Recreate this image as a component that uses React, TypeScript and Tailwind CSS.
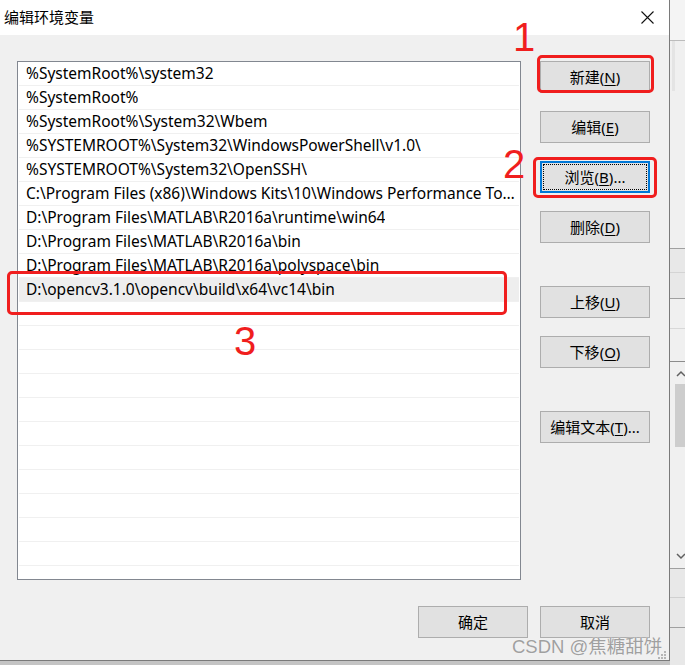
const FONT = "font-['Noto_Sans','Noto_Sans_CJK_SC',sans-serif]"

const paths = [
  '%SystemRoot%\\system32',
  '%SystemRoot%',
  '%SystemRoot%\\System32\\Wbem',
  '%SYSTEMROOT%\\System32\\WindowsPowerShell\\v1.0\\',
  '%SYSTEMROOT%\\System32\\OpenSSH\\',
  'C:\\Program Files (x86)\\Windows Kits\\10\\Windows Performance Toolkit\\',
  'D:\\Program Files\\MATLAB\\R2016a\\runtime\\win64',
  'D:\\Program Files\\MATLAB\\R2016a\\bin',
  'D:\\Program Files\\MATLAB\\R2016a\\polyspace\\bin',
  'D:\\opencv3.1.0\\opencv\\build\\x64\\vc14\\bin',
]

const EMPTY_ROWS = 11

function WinButton({
  label,
  acc,
  tail = '',
  focused = false,
}: {
  label: string
  acc?: string
  tail?: string
  focused?: boolean
}) {
  return (
    <div
      className={`h-[32px] w-[110px] flex items-center justify-center bg-[#e1e1e1] text-[15px] text-black ${
        focused
          ? 'border-2 border-[#0078d7] outline-1 outline-dotted outline-black -outline-offset-4'
          : 'border border-[#adadad]'
      }`}
    >
      <span>
        {label}
        {acc && (
          <>
            (<span className="underline underline-offset-2">{acc}</span>)
          </>
        )}
        {tail}
      </span>
    </div>
  )
}

function PathList() {
  return (
    <div className="w-[504px] h-[519px] border border-[#828790] bg-white overflow-hidden">
      {paths.map((p, i) => (
        <div
          key={i}
          className={`h-[24px] mx-[1px] flex items-center border-b border-[#f0f0f0] pl-[7px] pr-[2px] text-[15.5px] text-black ${
            i === paths.length - 1 ? 'bg-[#eeeeee]' : ''
          }`}
        >
          <span className="truncate">{p}</span>
        </div>
      ))}
      {Array.from({ length: EMPTY_ROWS }).map((_, i) => (
        <div key={'e' + i} className="h-[24px] mx-[1px] border-b border-[#f0f0f0]" />
      ))}
    </div>
  )
}

function SideStrip() {
  // the window behind the dialog, peeking out at the right edge
  return (
    <div className="w-[15px] h-[665px] flex flex-col bg-[#f0f0f0]">
      <div className="h-[41px] bg-[#f4f4f4] border-b border-[#bcbcbc]" />
      <div className="h-[208px] flex border-b border-[#a0a0a0]">
        <div className="w-[2px]" />
        <div className="w-[3px] h-[50px] bg-[#e4e4e4]" />
      </div>
      <div className="h-[24px] bg-[#e8e8e8] border-b border-[#d4d4d4]" />
      <div className="h-[26px] bg-[#e8e8e8] border-b border-[#a0a0a0]" />
      <div className="h-[30px] border-b border-[#d8d8d8]" />
      <div className="h-[33px] border-b border-[#8c8c8c]" />
      <div className="h-[207px] flex border-b border-[#a0a0a0]">
        <div className="w-[5px]" />
        <div className="w-[10px] flex flex-col items-center bg-[#f0f0f0]">
          <svg width="10" height="22" viewBox="0 0 10 22" className="shrink-0">
            <path d="M2 14 L6 10 L10 14" stroke="#606060" strokeWidth="1.5" fill="none" />
          </svg>
          <div className="w-[10px] h-[63px] bg-[#cdcdcd]" />
          <div className="flex-1" />
          <svg width="10" height="22" viewBox="0 0 10 22" className="shrink-0">
            <path d="M2 8 L6 12 L10 8" stroke="#606060" strokeWidth="1.5" fill="none" />
          </svg>
        </div>
      </div>
      <div className="h-[29px] bg-[#e8e8e8] border-b border-[#d0d0d0]" />
      <div className="h-[30px] bg-[#e8e8e8] border-b border-[#a0a0a0]" />
      <div className="flex-1 bg-[#e8e8e8]" />
    </div>
  )
}

export default function App() {
  return (
    <div className={`relative w-[685px] h-[665px] overflow-hidden flex ${FONT}`}>
      <div className="w-[670px] h-[665px] flex flex-col">
        <div className="h-[661px] flex flex-col border-r border-b border-[#7a7a7a] bg-[#f0f0f0]">
          {/* title bar */}
          <div className="h-[35px] shrink-0 bg-white flex items-center justify-between pl-[4px] pr-[15px]">
            <span className="text-[15px] text-black">编辑环境变量</span>
            <svg width="13" height="13" viewBox="0 0 13 13">
              <path d="M0.5 0.5 L12.5 12.5 M12.5 0.5 L0.5 12.5" stroke="#111" strokeWidth="1.1" />
            </svg>
          </div>

          {/* body */}
          <div className="relative flex-1 flex flex-col pt-[26px] pl-[17px] pr-[19px]">
            <div className="flex">
              <PathList />
              <div className="ml-[19px] flex flex-col">
                <div className="flex flex-col gap-[18px]">
                  <WinButton label="新建" acc="N" />
                  <WinButton label="编辑" acc="E" />
                  <WinButton label="浏览" acc="B" tail="..." focused />
                  <WinButton label="删除" acc="D" />
                </div>
                <div className="mt-[43px] flex flex-col gap-[18px]">
                  <WinButton label="上移" acc="U" />
                  <WinButton label="下移" acc="O" />
                </div>
                <div className="mt-[43px]">
                  <WinButton label="编辑文本" acc="T" tail="..." />
                </div>
              </div>
            </div>

            <div className="mt-[26px] flex justify-end gap-[12px]">
              <WinButton label="确定" />
              <WinButton label="取消" />
            </div>

            {/* watermark + resize grip */}
            <div className="absolute left-[512px] top-[601px] text-[18.5px] leading-[22px] text-[#a0a0a0] whitespace-nowrap font-['Liberation_Sans','Noto_Sans_CJK_SC',sans-serif] [text-shadow:0_0_1px_#ffffff]">
              CSDN @焦糖甜饼
            </div>
            <svg className="absolute left-[656px] top-[614px]" width="12" height="12" viewBox="0 0 12 12">
              {[
                [8, 2],
                [5, 5],
                [8, 5],
                [2, 8],
                [5, 8],
                [8, 8],
              ].map(([x, y], i) => (
                <rect key={i} x={x} y={y} width="2" height="2" fill="#b5b5b5" />
              ))}
            </svg>
          </div>
        </div>
        <div className="flex-1 bg-[#c4c4c4]" />
      </div>

      <SideStrip />

      {/* red annotations */}
      <div className="absolute left-[537px] top-[55px] w-[117px] h-[38px] border-[3px] border-[#f01e1e] rounded-[5px]" />
      <div className="absolute left-[533px] top-[157px] w-[124px] h-[41px] border-[3px] border-[#f01e1e] rounded-[5px]" />
      <div className="absolute left-[7px] top-[271px] w-[500px] h-[44px] border-[3px] border-[#f01e1e] rounded-[5px]" />
      <div className="absolute left-[513px] top-[17px] text-[40px] leading-[40px] text-[#f01e1e] font-['Liberation_Sans',sans-serif]">1</div>
      <div className="absolute left-[503px] top-[144px] text-[40px] leading-[40px] text-[#f01e1e] font-['Liberation_Sans',sans-serif]">2</div>
      <div className="absolute left-[234px] top-[321px] text-[40px] leading-[40px] text-[#f01e1e] font-['Liberation_Sans',sans-serif]">3</div>
    </div>
  )
}
